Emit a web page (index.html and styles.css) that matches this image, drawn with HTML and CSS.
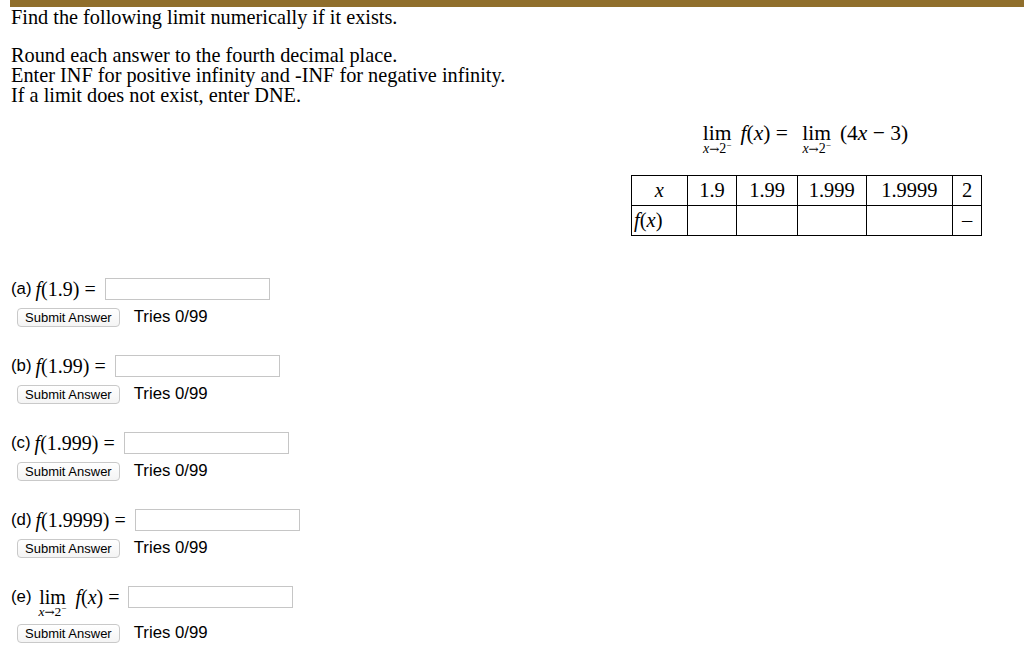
FILE: index.html
```html
<!DOCTYPE html>
<html lang="en">
<head>
    <meta charset="UTF-8">
    <title>Limit Problem</title>
    <link rel="stylesheet" href="styles.css">
</head>
<body>

    <div class="topbar"></div>

    <div class="problem">
        <p class="intro">Find the following limit numerically if it exists.</p>
        <p class="intro">Round each answer to the fourth decimal place.<br>
        Enter INF for positive infinity and -INF for negative infinity.<br>
        If a limit does not exist, enter DNE.</p>

        <div class="figure">
            <div class="formula">
                <span class="lim"><span class="lim-word">lim</span><span class="lim-sub"><i>x</i><span class="arrow">→</span>2<sup>−</sup></span></span>
                <span class="expr"><i>f</i>(<i>x</i>) = </span>
                <span class="lim"><span class="lim-word">lim</span><span class="lim-sub"><i>x</i><span class="arrow">→</span>2<sup>−</sup></span></span>
                <span class="expr">(4<i>x</i> − 3)</span>
            </div>

            <table class="values">
                <tr>
                    <td class="c-x"><i>x</i></td>
                    <td class="c1">1.9</td>
                    <td class="c2">1.99</td>
                    <td class="c3">1.999</td>
                    <td class="c4">1.9999</td>
                    <td class="c5">2</td>
                </tr>
                <tr>
                    <td class="c-x fx"><i>f</i>(<i>x</i>)</td>
                    <td></td>
                    <td></td>
                    <td></td>
                    <td></td>
                    <td>–</td>
                </tr>
            </table>
        </div>

        <div class="part">
            <div class="question">
                <span class="tag">(a)</span>
                <span class="math"><i>f</i>(1.9) =</span>
                <input type="text" class="answer">
            </div>
            <div class="actions">
                <button class="submit">Submit Answer</button>
                <span class="tries">Tries 0/99</span>
            </div>
        </div>

        <div class="part">
            <div class="question">
                <span class="tag">(b)</span>
                <span class="math"><i>f</i>(1.99) =</span>
                <input type="text" class="answer">
            </div>
            <div class="actions">
                <button class="submit">Submit Answer</button>
                <span class="tries">Tries 0/99</span>
            </div>
        </div>

        <div class="part">
            <div class="question">
                <span class="tag">(c)</span>
                <span class="math"><i>f</i>(1.999) =</span>
                <input type="text" class="answer">
            </div>
            <div class="actions">
                <button class="submit">Submit Answer</button>
                <span class="tries">Tries 0/99</span>
            </div>
        </div>

        <div class="part">
            <div class="question">
                <span class="tag">(d)</span>
                <span class="math"><i>f</i>(1.9999) =</span>
                <input type="text" class="answer">
            </div>
            <div class="actions">
                <button class="submit">Submit Answer</button>
                <span class="tries">Tries 0/99</span>
            </div>
        </div>

        <div class="part part-last">
            <div class="question">
                <span class="tag tag-lim">(e)</span>
                <span class="lim small"><span class="lim-word">lim</span><span class="lim-sub"><i>x</i><span class="arrow">→</span>2<sup>−</sup></span></span>
                <span class="math"><i>f</i>(<i>x</i>) =</span>
                <input type="text" class="answer">
            </div>
            <div class="actions">
                <button class="submit">Submit Answer</button>
                <span class="tries">Tries 0/99</span>
            </div>
        </div>
    </div>

</body>
</html>
```

FILE: styles.css
```css
body {
    margin: 0;
    font-family: "Liberation Serif", "Times New Roman", serif;
    color: #000;
    background: #fff;
}

.topbar {
    height: 7px;
    margin-left: 10px;
    background: #906f2c;
}

.problem {
    padding-left: 11px;
}

.intro {
    margin: 0 0 18px 0;
    font-size: 20.3px;
    line-height: 20px;
}

.figure {
    width: 351px;
    margin: 4px 42px 0 auto;
}

.formula {
    display: flex;
    justify-content: center;
    align-items: baseline;
    gap: 9px;
    font-size: 21.5px;
    height: 52px;
    padding-top: 2px;
    box-sizing: border-box;
    padding-right: 2px;
}

.lim {
    display: inline-flex;
    flex-direction: column;
    align-items: center;
}

.lim-word {
    line-height: 17px;
}

.lim-sub {
    font-size: 14px;
    line-height: 12px;
    margin-top: 1px;
}

.lim-sub .arrow {
    font-family: "DejaVu Serif", serif;
    font-size: 12px;
}

.lim-sub sup {
    font-size: 9px;
    line-height: 0;
    vertical-align: 5px;
}

.expr {
    line-height: 17px;
    white-space: pre;
}

.values {
    border-collapse: collapse;
    font-size: 20.5px;
    width: 351px;
}

.values td {
    border: 1px solid #000;
    height: 29px;
    padding: 0;
    text-align: center;
}

.values .c-x { width: 53px; }
.values .c1 { width: 49px; }
.values .c2 { width: 60px; }
.values .c3 { width: 68px; }
.values .c4 { width: 86px; }
.values .c5 { width: 28px; }

.values .fx {
    text-align: left;
    padding-left: 2px;
}

.part {
    margin-top: 42px;
}

.part + .part {
    margin-top: 28px;
}

.question {
    display: flex;
    align-items: flex-start;
    height: 22px;
}

.tag {
    font-family: "Liberation Sans", Arial, sans-serif;
    font-size: 16.8px;
    line-height: 22px;
    margin-right: 4px;
}

.tag-lim {
    margin-right: 7px;
}

.math {
    font-size: 20px;
    line-height: 22px;
    margin-right: 9px;
    white-space: pre;
}

.question .lim.small {
    font-size: 20px;
    margin-right: 9px;
    margin-top: 3px;
}

.question .lim.small .lim-word {
    line-height: 16px;
}

.question .lim.small .lim-sub {
    font-size: 13.5px;
    line-height: 12px;
    margin-top: 1px;
}

.answer {
    width: 165px;
    height: 22px;
    box-sizing: border-box;
    border: 1px solid #c6c6c6;
    padding: 2px 4px;
    margin: 0;
}

.actions {
    display: flex;
    align-items: center;
    margin-top: 7px;
    padding-left: 6px;
}

.part-last .actions {
    margin-top: 15px;
}

.submit {
    font-family: "Liberation Sans", Arial, sans-serif;
    font-size: 13px;
    height: 19px;
    padding: 0 7px;
    border: 1px solid #c9c9c9;
    border-radius: 4px;
    background: linear-gradient(#fff, #f4f4f4);
    color: #000;
    margin-right: 14px;
}

.tries {
    font-family: "Liberation Sans", Arial, sans-serif;
    font-size: 16.8px;
}
```
